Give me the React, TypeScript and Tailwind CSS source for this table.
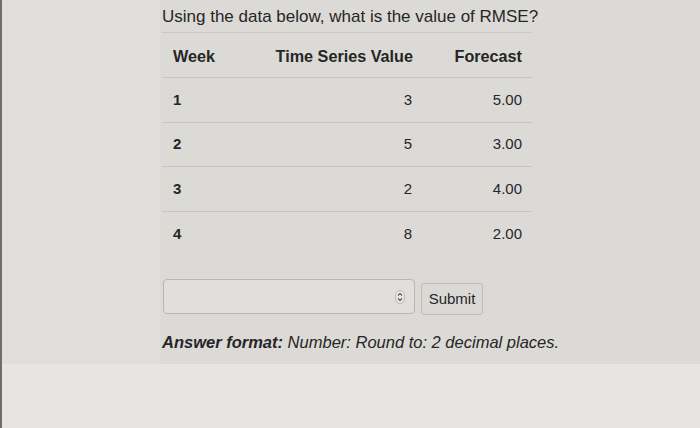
import React from "react";

const rows = [
  ["1", "3", "5.00"],
  ["2", "5", "3.00"],
  ["3", "2", "4.00"],
  ["4", "8", "2.00"],
];

export default function App() {
  return (
    <div
      className="w-[700px] h-[428px] flex flex-col bg-[#e7e5e2] text-[#262626] overflow-hidden"
      style={{ fontFamily: '"Liberation Sans", Arial, sans-serif' }}
    >
      <div className="flex h-[364px]">
        <div className="w-[2px] bg-[#6e6d6b]" />
        <div className="w-[158px] bg-[#e0deda]" />
        <div className="flex-1 bg-[#dcdad6] pl-[2px]">
          <div className="w-[370px]">
            <div className="pt-[7px] pb-[5px] text-[17px] leading-[20px] border-b border-[#cbc9c5] whitespace-nowrap">
              Using the data below, what is the value of RMSE?
            </div>
            <div className="grid grid-cols-[105px_150px_115px] h-[45px] items-center border-b border-[#c6c4c0] text-[16.2px] font-bold">
              <div className="pl-[11px] pt-[2px]">Week</div>
              <div className="text-right pr-[4px] pt-[2px]">Time Series Value</div>
              <div className="text-right pr-[10px] pt-[2px]">Forecast</div>
            </div>
            {rows.map((r, i) => (
              <div
                key={i}
                className={`grid grid-cols-[105px_150px_115px] h-[44.5px] items-center text-[15px] ${
                  i < 3 ? "border-b border-[#c6c4c0]" : ""
                }`}
              >
                <div className="pl-[11px] font-bold">{r[0]}</div>
                <div className="text-right pr-[5px]">{r[1]}</div>
                <div className="text-right pr-[10px]">{r[2]}</div>
              </div>
            ))}
            <div className="flex items-center gap-[6px] mt-[22px] ml-[1px]">
              <div className="w-[252px] h-[35px] rounded-[4px] border border-[#b9b7b3] bg-[#e1dfdc] flex items-center justify-end pr-[9px]">
                <svg width="10" height="14" viewBox="0 0 10 14">
                  <rect x="0.5" y="0.5" width="9" height="13" rx="4.5" fill="#e8e6e3" stroke="#bdbbb7" />
                  <path d="M3 5.5 L5 3.5 L7 5.5" fill="none" stroke="#555" strokeWidth="1.1" />
                  <path d="M3 8.5 L5 10.5 L7 8.5" fill="none" stroke="#555" strokeWidth="1.1" />
                </svg>
              </div>
              <div className="w-[62px] h-[32px] mt-[5px] rounded-[3px] border border-[#bebcb8] bg-[#dbd9d5] flex items-center justify-center text-[15px]">
                Submit
              </div>
            </div>
            <div className="mt-[15px] text-[16.5px] italic whitespace-nowrap">
              <span className="font-bold">Answer format:</span> Number: Round to: 2 decimal places.
            </div>
          </div>
        </div>
      </div>
      <div className="flex-1 flex">
        <div className="w-[2px] bg-[#6e6d6b]" />
        <div className="flex-1" />
      </div>
    </div>
  );
}
